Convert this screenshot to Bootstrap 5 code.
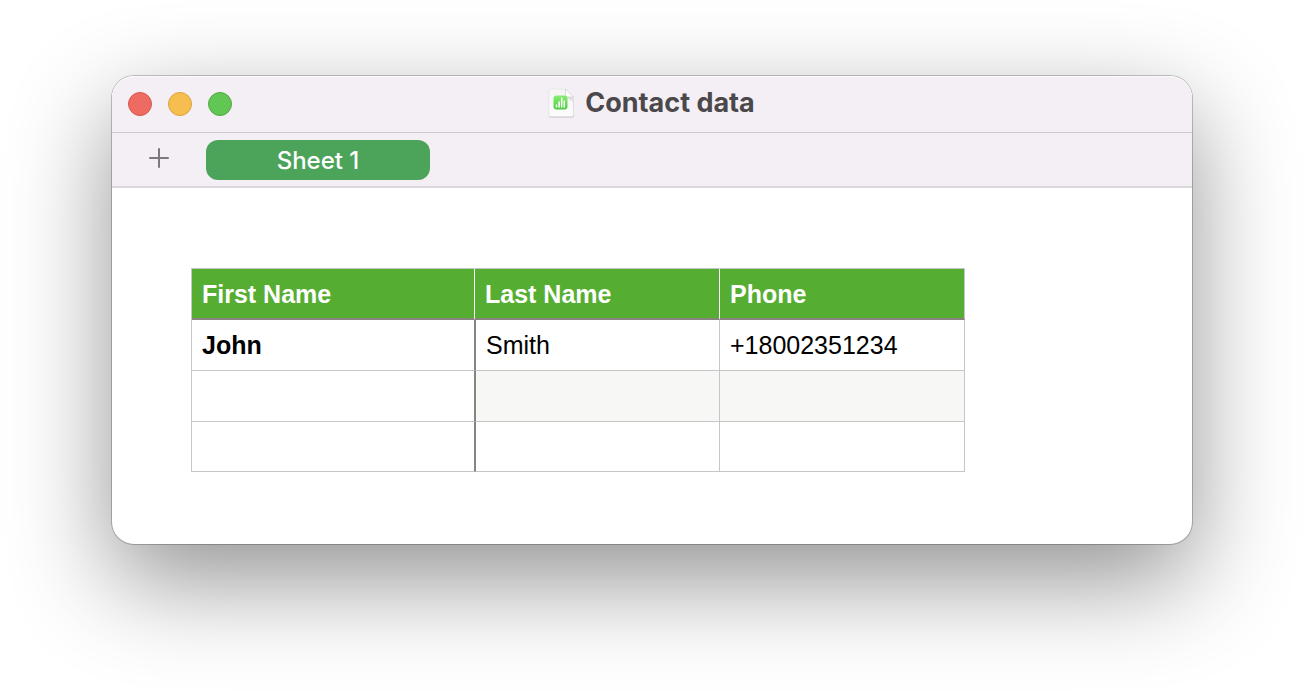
<!DOCTYPE html>
<html lang="en">
<head>
<meta charset="utf-8">
<meta name="viewport" content="width=device-width, initial-scale=1">
<title>Contact data</title>
<link href="https://cdn.jsdelivr.net/npm/bootstrap@5.3.0/dist/css/bootstrap.min.css" rel="stylesheet">
<style>
  body { background: #fff; font-family: Inter, sans-serif; }
  .desktop { padding: 76px 112px 148px; }
  .app-window {
    border-radius: 22px;
    background: #fff;
    box-shadow: 0 0 0 1px rgba(0,0,0,.22), 0 36px 100px rgba(0,0,0,.43);
  }
  .title-bar {
    height: 57px;
    padding: 0 16px 1px;
    background: #f4eff4;
    border-bottom: 1px solid #cdc8cd;
    border-radius: 22px 22px 0 0;
    box-shadow: inset 0 1px 0 #fbf9fb;
  }
  .side { flex: 1 1 0; }
  .title-group { padding: 0 2px 2px 0; }
  .light { width: 24px; height: 24px; border-radius: 50%; padding: 0; border: 1px solid; }
  .light-close { background: #ed6b60; border-color: #d6574d; }
  .light-min { background: #f5be4f; border-color: #dba33c; }
  .light-zoom { background: #62c655; border-color: #50aa41; }
  .doc-title { font-size: 27px; line-height: 32px; font-weight: 700; color: #4b484c; }
  .tab-strip {
    height: 55px;
    padding-left: 32px;
    gap: 32px;
    background: #f4eff5;
    border-bottom: 2px solid #dcd7dd;
  }
  .add-sheet { width: 30px; height: 30px; border: 0; background: none; }
  .sheet-tab {
    width: 224px; height: 40px; border: 0; border-radius: 12px; padding: 2px 0 0;
    background: #4ca35a; color: #fff; font-size: 24px; line-height: 38px; font-weight: 500;
  }
  .sheet-area { padding: 80px 79px 72px; }
  .grid-table {
    width: 774px; max-width: 100%;
    table-layout: fixed;
    border-collapse: separate; border-spacing: 0;
    border: 0 solid #c6c6c6; border-width: 1px 0 0 1px;
    font-family: "Liberation Sans", Arial, sans-serif;
    font-size: 25px; line-height: 30px; color: #000;
  }
  .grid-table th, .grid-table td {
    height: 51px; padding: 0 10px; vertical-align: middle;
    border: 0 solid #c6c6c6; border-width: 0 1px 1px 0;
  }
  .grid-table thead th {
    background: #55ae32; color: #fff;
    border-right-color: #fff; border-bottom: 2px solid #88837f;
  }
  .grid-table thead th:last-child { border-right-color: #c6c6c6; }
  .grid-table tbody th { border-right-color: #88837f; }
  .grid-table tbody th + td { border-left: 1px solid #88837f; }
  .grid-table tbody tr:nth-child(even) td { background: #f7f7f5; }
  .grid-table tbody tr:last-child > * { height: 50px; }
  .col-first { width: 283px; }
</style>
</head>
<body>
<div class="desktop">
  <main class="app-window">
    <header class="title-bar d-flex align-items-center">
      <div class="side d-flex gap-3">
        <button type="button" class="light light-close" aria-label="Close"></button>
        <button type="button" class="light light-min" aria-label="Minimize"></button>
        <button type="button" class="light light-zoom" aria-label="Zoom"></button>
      </div>
      <div class="title-group d-flex align-items-center gap-2">
        <svg width="30" height="32" viewBox="-1 -1 30 32" aria-hidden="true">
          <defs>
            <linearGradient id="leaf" x1="0" y1="0" x2="0" y2="1"><stop offset="0" stop-color="#86ee72"/><stop offset="1" stop-color="#50cb43"/></linearGradient>
            <linearGradient id="paper" x1="0" y1="0" x2="0" y2="1"><stop offset="0" stop-color="#f5f5f4"/><stop offset="1" stop-color="#fcfcfc"/></linearGradient>
          </defs>
          <path d="M2.500 2H18l8 8v17.500a2 2 0 0 1-2 2H2.500a1.600 1.600 0 0 1-1.600-1.600V3.500z" fill="#c6c2c6"/>
          <path d="M2.500 1H17.500l8 8v18A1.500 1.500 0 0 1 24 28.500H2.500A1.500 1.500 0 0 1 1 27V2.500A1.500 1.500 0 0 1 2.500 1z" fill="url(#paper)" stroke="#dedbde" stroke-width=".4"/>
          <path d="M17 8.500l8.500.5v5z" fill="#e0e0e0"/>
          <path d="M17.500 1l8 8H19A1.500 1.500 0 0 1 17.500 7.500z" fill="#fff" stroke="#c6c4c6" stroke-width=".6" stroke-linejoin="round"/>
          <rect x="5.500" y="7.500" width="14" height="14" rx="3" fill="url(#leaf)"/>
          <path d="M8.500 19.500v-3M11.100 19.500v-6M13.700 19.500V9.500M16.300 19.500V12.500" stroke="#fff" stroke-width="1.500"/>
        </svg>
        <h1 class="doc-title mb-0">Contact data</h1>
      </div>
      <div class="side"></div>
    </header>
    <nav class="tab-strip d-flex align-items-center" aria-label="Sheets">
      <button type="button" class="add-sheet d-flex align-items-center justify-content-center p-0 pb-1" aria-label="Add sheet">
        <svg width="20" height="20" viewBox="0 0 20 20" aria-hidden="true"><path d="M10 1v18M1 10h18" stroke="#7d787d" stroke-width="2" stroke-linecap="round"/></svg>
      </button>
      <button type="button" class="sheet-tab">Sheet 1</button>
    </nav>
    <section class="sheet-area">
      <table class="grid-table">
        <colgroup><col class="col-first"><col><col></colgroup>
        <thead><tr><th scope="col">First Name</th><th scope="col">Last Name</th><th scope="col">Phone</th></tr></thead>
        <tbody>
          <tr><th scope="row">John</th><td>Smith</td><td>+18002351234</td></tr>
          <tr><th></th><td></td><td></td></tr>
          <tr><th></th><td></td><td></td></tr>
        </tbody>
      </table>
    </section>
  </main>
</div>
<script src="https://cdn.jsdelivr.net/npm/bootstrap@5.3.0/dist/js/bootstrap.bundle.min.js"></script>
</body>
</html>
